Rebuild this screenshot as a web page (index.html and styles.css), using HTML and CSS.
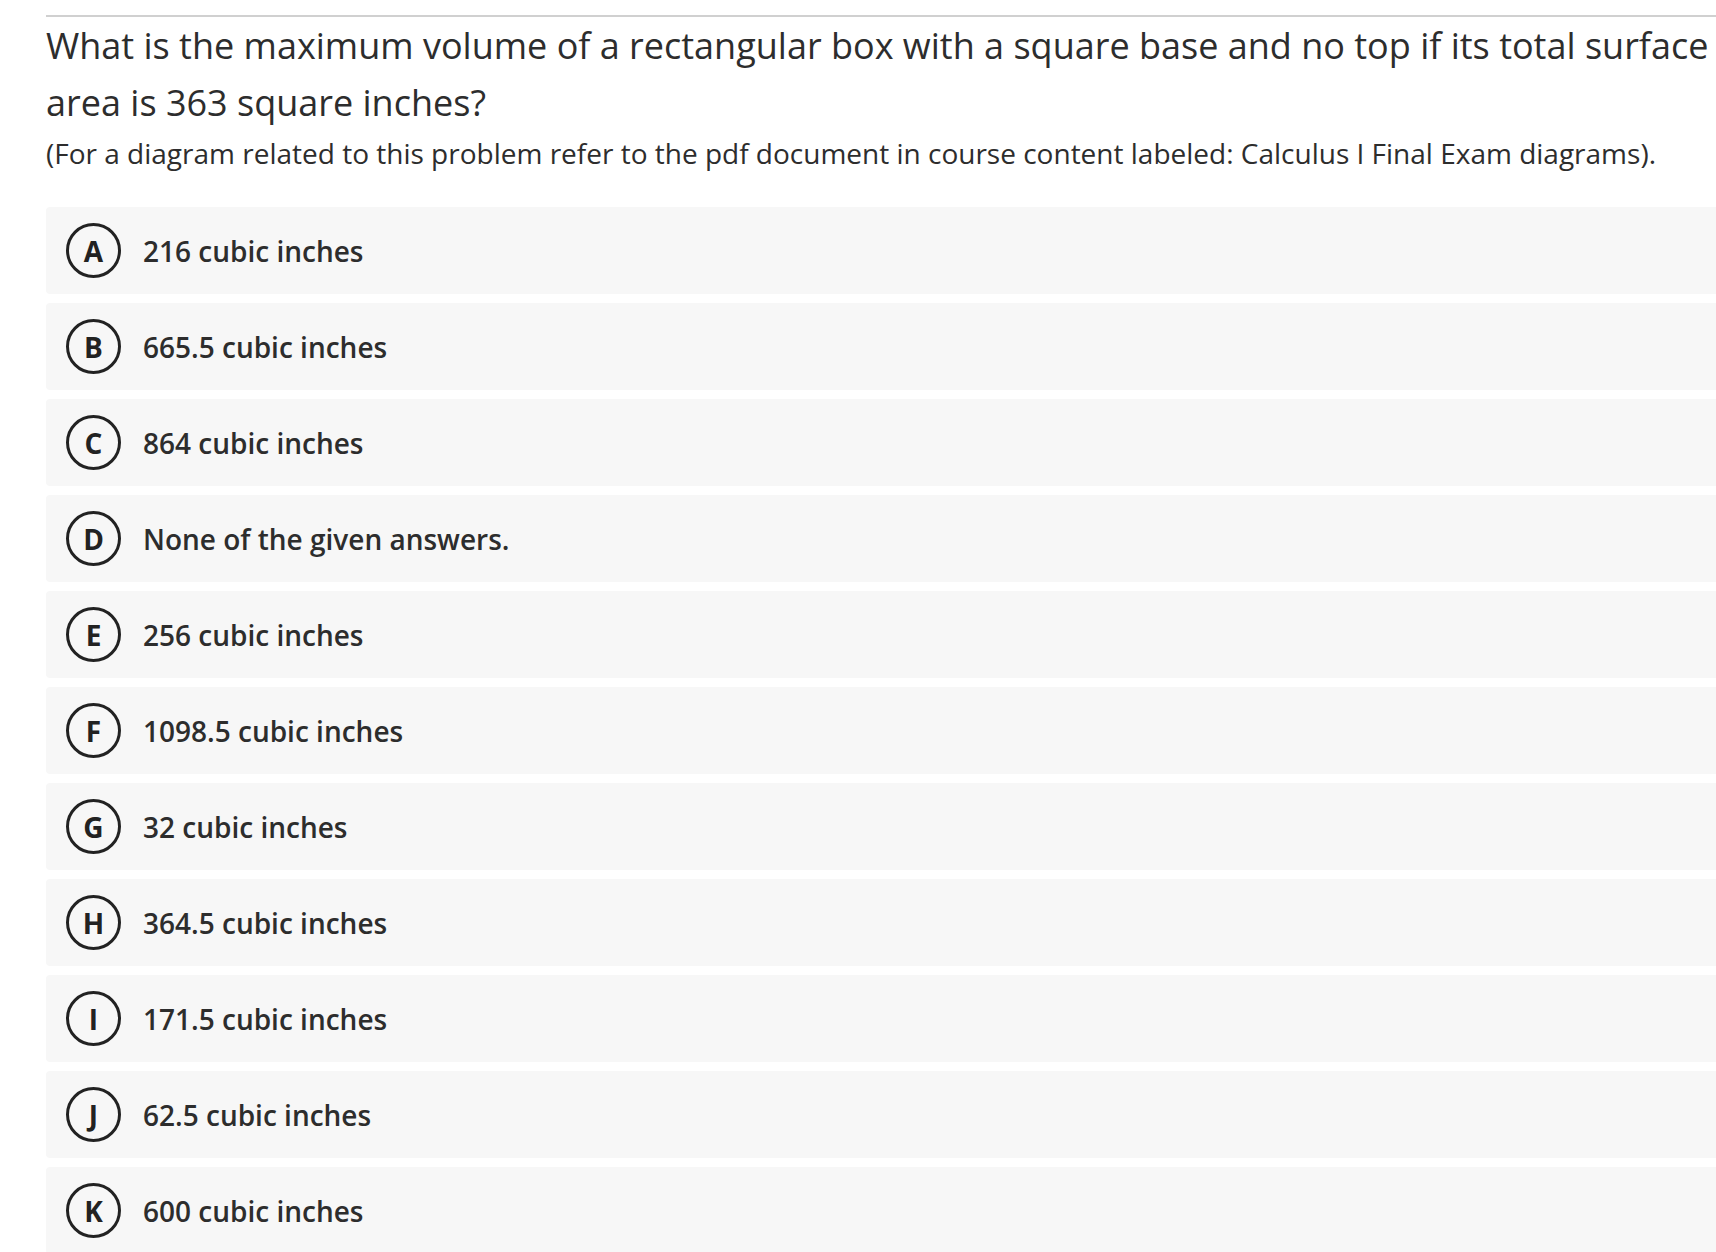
FILE: index.html
```html
<!DOCTYPE html>
<html>
<head>
<meta charset="utf-8">
<link rel="stylesheet" href="styles.css">
</head>
<body>
<div class="page">
  <div class="question">
    <div class="prompt">What is the maximum volume of a rectangular box with a square base and no top if its total surface area is 363 square inches?</div>
    <div class="note">(For a diagram related to this problem refer to the pdf document in course content labeled: Calculus I Final Exam diagrams).</div>
  </div>
  <div class="options">
    <div class="option"><span class="letter">A</span><span class="text">216 cubic inches</span></div>
    <div class="option"><span class="letter">B</span><span class="text">665.5 cubic inches</span></div>
    <div class="option"><span class="letter">C</span><span class="text">864 cubic inches</span></div>
    <div class="option"><span class="letter">D</span><span class="text">None of the given answers.</span></div>
    <div class="option"><span class="letter">E</span><span class="text">256 cubic inches</span></div>
    <div class="option"><span class="letter">F</span><span class="text">1098.5 cubic inches</span></div>
    <div class="option"><span class="letter">G</span><span class="text">32 cubic inches</span></div>
    <div class="option"><span class="letter">H</span><span class="text">364.5 cubic inches</span></div>
    <div class="option"><span class="letter">I</span><span class="text">171.5 cubic inches</span></div>
    <div class="option"><span class="letter">J</span><span class="text">62.5 cubic inches</span></div>
    <div class="option"><span class="letter">K</span><span class="text">600 cubic inches</span></div>
  </div>
</div>
</body>
</html>
```
FILE: styles.css
```css
html, body {
  margin: 0;
  padding: 0;
  background: #ffffff;
}
body {
  font-family: "Open Sans", "Noto Sans", sans-serif;
  color: #2d2d2d;
  overflow: hidden;
}
.page {
  padding: 15px 0 0 46px;
  width: 1720px;
}
.question {
  border-top: 2px solid #d0d0d0;
}
.prompt {
  font-size: 36px;
  line-height: 57px;
  font-weight: 400;
  max-width: 1668px;
}
.note {
  font-size: 28px;
  line-height: 39px;
  margin-top: 3px;
}
.options {
  margin-top: 34px;
  display: flex;
  flex-direction: column;
  gap: 9px;
}
.option {
  height: 87px;
  background: #f7f7f7;
  border-radius: 4px;
  display: flex;
  align-items: center;
  padding-left: 20px;
  gap: 22px;
}
.letter {
  box-sizing: border-box;
  width: 55px;
  height: 55px;
  border: 3.5px solid #222;
  border-radius: 50%;
  display: flex;
  align-items: center;
  justify-content: center;
  font-size: 28px;
  font-weight: 700;
  color: #222;
  flex-shrink: 0;
}
.text {
  font-size: 28px;
  font-weight: 600;
  color: #2d2d2d;
}
```
